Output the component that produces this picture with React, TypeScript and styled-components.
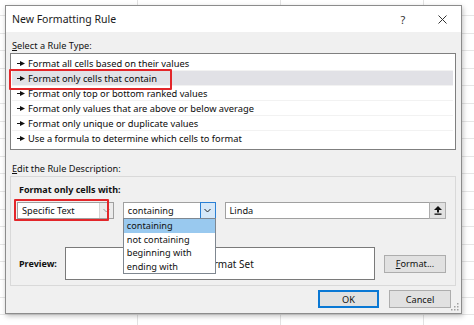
import React from 'react';
import styled, { createGlobalStyle, css } from 'styled-components';

const GlobalStyle = createGlobalStyle`
  html, body {
    margin: 0;
    padding: 0;
  }
  body {
    width: 474px;
    height: 325px;
    overflow: hidden;
    font-family: 'Noto Sans', 'Open Sans', sans-serif;
    color: #111111;
    background-color: #ffffff;
    background-image:
      repeating-linear-gradient(90deg, transparent 0 137px, #e2e2e2 137px 138px, transparent 138px 143px),
      repeating-linear-gradient(180deg, transparent 0 15px, #e6e6e6 15px 16px, transparent 16px 17.6px);
  }
`;

const Dialog = styled.div`
  position: relative;
  margin: 5px 0 0 5px;
  width: 457px;
  height: 309px;
  box-sizing: border-box;
  border: 1px solid #8c8c8c;
  background: #f0f0f0;
  display: flex;
  flex-direction: column;
  box-shadow: 1px 2px 5px rgba(0, 0, 0, 0.25);
`;

const TitleBar = styled.div`
  height: 26px;
  background: #ffffff;
  display: flex;
  align-items: center;
  padding: 0 4px 0 6px;
`;

const Title = styled.span`
  font-size: 10.5px;
  color: #1a1a1a;
`;

const TitleButtons = styled.div`
  margin-left: auto;
  display: flex;
  gap: 9px;
`;

const TitleButton = styled.div`
  width: 30px;
  height: 26px;
  display: flex;
  align-items: center;
  justify-content: center;
  font-size: 11px;
  color: #333;
`;

const Body = styled.div`
  flex: 1;
  display: flex;
  flex-direction: column;
  padding: 0 5px 0 4px;
`;

const SectionLabel = styled.div<{ $top: number }>`
  margin-top: ${({ $top }) => $top}px;
  padding-left: 2px;
  height: 14px;
  line-height: 14px;
  font-size: 9.2px;
  u {
    text-decoration-thickness: 1px;
    text-underline-offset: 1px;
  }
`;

const RuleList = styled.ul`
  list-style: none;
  margin: 0;
  padding: 2px 2px 3px 1px;
  border: 1px solid #7f7f7f;
  background: #ffffff;
`;

const RuleItem = styled.li<{ $selected?: boolean }>`
  position: relative;
  height: 15px;
  box-sizing: border-box;
  display: flex;
  align-items: center;
  gap: 3px;
  padding-left: 5px;
  font-size: 9.3px;
  color: #0a0a0a;
  border-bottom: 1px solid #f2f2f2;
  background: ${({ $selected }) => ($selected ? '#e1e1e6' : 'transparent')};
  &:last-child {
    border-bottom: none;
  }
`;

const RedMark = styled.span<{ $w: number; $h: number; $l: number; $t: number }>`
  position: absolute;
  left: ${({ $l }) => $l}px;
  top: ${({ $t }) => $t}px;
  width: ${({ $w }) => $w}px;
  height: ${({ $h }) => $h}px;
  box-sizing: border-box;
  border: 2px solid #e3262a;
  border-radius: 1px;
  pointer-events: none;
  z-index: 3;
`;

const GroupBox = styled.div`
  height: 110px;
  box-sizing: border-box;
  border: 1px solid #d9d9d9;
  padding: 6px 9px 0 6px;
  display: flex;
  flex-direction: column;
`;

const BoldLabel = styled.div<{ $width?: number }>`
  padding-left: 2px;
  height: 14px;
  line-height: 14px;
  font-size: 9px;
  font-weight: 700;
  width: ${({ $width }) => ($width ? `${$width}px` : 'auto')};
  flex-shrink: 0;
`;

const ControlRow = styled.div`
  margin-top: 5px;
  display: flex;
  height: 17px;
  gap: 9px;
`;

const Combo = styled.div<{ $width: number }>`
  position: relative;
  width: ${({ $width }) => $width}px;
  height: 17px;
  box-sizing: border-box;
  border: 1px solid #a0a0a0;
  background: #ffffff;
  display: flex;
  align-items: stretch;
`;

const FieldText = styled.span`
  flex: 1;
  padding-left: 4px;
  font-size: 9.2px;
  line-height: 15px;
  white-space: nowrap;
  overflow: hidden;
`;

const DropButton = styled.span<{ $active?: boolean }>`
  width: 14px;
  display: flex;
  align-items: center;
  justify-content: center;
  box-sizing: border-box;
  ${({ $active }) =>
    $active
      ? css`
          background: #d6e8f8;
          border: 1px solid #2a7fd4;
          margin: -1px -1px -1px 0;
          width: 16px;
        `
      : css`
          background: #ececec;
          border-left: 1px solid #d4d4d4;
        `}
`;

const DropList = styled.ul`
  position: absolute;
  top: 100%;
  left: -1px;
  width: 93px;
  margin: 0;
  padding: 0;
  list-style: none;
  box-sizing: border-box;
  border: 1px solid #7f8790;
  background: #ffffff;
  z-index: 4;
`;

const DropItem = styled.li<{ $selected?: boolean }>`
  height: 13.5px;
  line-height: 13.5px;
  padding-left: 3px;
  font-size: 9.2px;
  background: ${({ $selected }) => ($selected ? '#99c9ef' : 'transparent')};
`;

const TextField = styled.div`
  width: 222px;
  height: 17px;
  box-sizing: border-box;
  border: 1px solid #a0a0a0;
  background: #ffffff;
  display: flex;
`;

const RefButton = styled.span`
  width: 17px;
  margin: -1px -1px -1px 0;
  box-sizing: border-box;
  border: 1px solid #adadad;
  background: #e1e1e1;
  display: flex;
  align-items: center;
  justify-content: center;
`;

const PreviewRow = styled.div`
  margin-top: 28px;
  display: flex;
  align-items: center;
`;

const PreviewBox = styled.div`
  width: 310px;
  height: 33px;
  box-sizing: border-box;
  border: 1px solid #7a7a7a;
  background: #ffffff;
  display: flex;
  align-items: center;
  justify-content: center;
  font-size: 10px;
`;

const Button = styled.button<{ $width: number; $primary?: boolean }>`
  width: ${({ $width }) => $width}px;
  height: 18px;
  box-sizing: border-box;
  padding: 0;
  font-family: inherit;
  font-size: 9.2px;
  color: #111;
  background: #e1e1e1;
  border: ${({ $primary }) => ($primary ? '2px solid #0a78d4' : '1px solid #adadad')};
  u {
    text-decoration-thickness: 1px;
    text-underline-offset: 1px;
  }
`;

const FormatButton = styled(Button)`
  margin-left: 9px;
`;

const Footer = styled.div`
  margin-top: 4px;
  padding-right: 5px;
  display: flex;
  justify-content: flex-end;
  gap: 10px;
`;

const Grip = styled.svg`
  position: absolute;
  right: 2px;
  bottom: 2px;
`;

const Pointer = () => (
  <svg width="8" height="5" viewBox="0 0 8 5">
    <rect x="0" y="2" width="4" height="1" fill="#111" />
    <polygon points="3,0 8,2.5 3,5" fill="#111" />
  </svg>
);

const Chevron = ({ color }: { color: string }) => (
  <svg width="7" height="5" viewBox="0 0 7 5">
    <polyline points="0.5,1 3.5,4 6.5,1" fill="none" stroke={color} strokeWidth="1" />
  </svg>
);

const rules = [
  'Format all cells based on their values',
  'Format only cells that contain',
  'Format only top or bottom ranked values',
  'Format only values that are above or below average',
  'Format only unique or duplicate values',
  'Use a formula to determine which cells to format',
];

const operators = ['containing', 'not containing', 'beginning with', 'ending with'];

export default function App() {
  return (
    <>
      <GlobalStyle />
      <Dialog>
        <TitleBar>
          <Title>New Formatting Rule</Title>
          <TitleButtons>
            <TitleButton>?</TitleButton>
            <TitleButton>
              <svg width="9" height="9" viewBox="0 0 9 9">
                <path d="M0.5 0.5 L8.5 8.5 M8.5 0.5 L0.5 8.5" stroke="#333" strokeWidth="1" />
              </svg>
            </TitleButton>
          </TitleButtons>
        </TitleBar>
        <Body>
          <SectionLabel $top={7}>
            <u>S</u>elect a Rule Type:
          </SectionLabel>
          <RuleList>
            {rules.map((rule, i) => (
              <RuleItem key={rule} $selected={i === 1}>
                <Pointer />
                {rule}
                {i === 1 && <RedMark $l={-3} $t={-2} $w={163} $h={21} />}
              </RuleItem>
            ))}
          </RuleList>
          <SectionLabel $top={12}>
            <u>E</u>dit the Rule Description:
          </SectionLabel>
          <GroupBox>
            <BoldLabel>Format only cells with:</BoldLabel>
            <ControlRow>
              <Combo $width={97}>
                <FieldText>Specific Text</FieldText>
                <DropButton>
                  <Chevron color="#9a9a9a" />
                </DropButton>
                <RedMark $l={-4} $t={-4} $w={95} $h={22} />
              </Combo>
              <Combo $width={93}>
                <FieldText>containing</FieldText>
                <DropButton $active>
                  <Chevron color="#222" />
                </DropButton>
                <DropList>
                  {operators.map((op, i) => (
                    <DropItem key={op} $selected={i === 0}>
                      {op}
                    </DropItem>
                  ))}
                </DropList>
              </Combo>
              <TextField>
                <FieldText>Linda</FieldText>
                <RefButton>
                  <svg width="8" height="9" viewBox="0 0 8 9">
                    <polygon points="4,0 8,4 5,4 5,6.5 3,6.5 3,4 0,4" fill="#111" />
                    <rect x="0.5" y="7.5" width="7" height="1.3" fill="#111" />
                  </svg>
                </RefButton>
              </TextField>
            </ControlRow>
            <PreviewRow>
              <BoldLabel $width={46}>Preview:</BoldLabel>
              <PreviewBox>No Format Set</PreviewBox>
              <FormatButton $width={62}>
                <u>F</u>ormat...
              </FormatButton>
            </PreviewRow>
          </GroupBox>
          <Footer>
            <Button $width={61} $primary>
              OK
            </Button>
            <Button $width={62}>Cancel</Button>
          </Footer>
        </Body>
        <Grip width="8" height="8" viewBox="0 0 8 8">
          <rect x="6" y="0" width="1.5" height="1.5" fill="#a0a0a0" />
          <rect x="3" y="3" width="1.5" height="1.5" fill="#a0a0a0" />
          <rect x="6" y="3" width="1.5" height="1.5" fill="#a0a0a0" />
          <rect x="0" y="6" width="1.5" height="1.5" fill="#a0a0a0" />
          <rect x="3" y="6" width="1.5" height="1.5" fill="#a0a0a0" />
          <rect x="6" y="6" width="1.5" height="1.5" fill="#a0a0a0" />
        </Grip>
      </Dialog>
    </>
  );
}
